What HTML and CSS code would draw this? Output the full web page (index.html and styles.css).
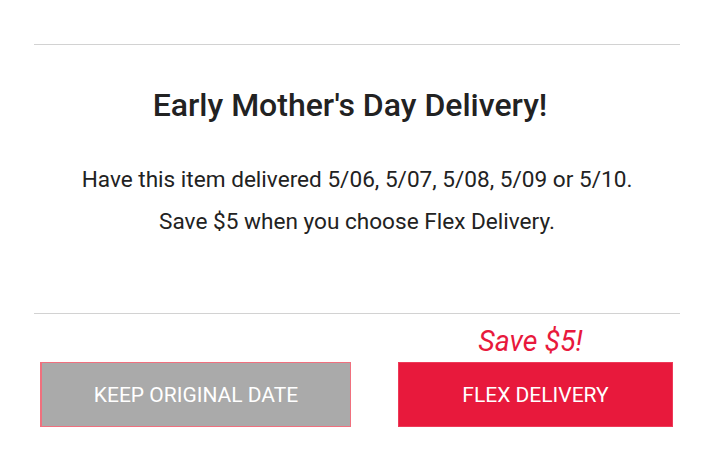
FILE: index.html
```html
<!DOCTYPE html>
<html lang="en">
<head>
    <meta charset="UTF-8">
    <meta name="viewport" content="width=device-width, initial-scale=1.0">
    <title>Flex Delivery</title>
    <link rel="stylesheet" href="styles.css">
</head>
<body>

<div class="modal">
    <hr class="divider">

    <section class="promo">
        <h2>Early Mother's Day Delivery!</h2>
        <p>Have this item delivered 5/06, 5/07, 5/08, 5/09 or 5/10.</p>
        <p>Save $5 when you choose Flex Delivery.</p>
    </section>

    <hr class="divider">

    <div class="actions">
        <button class="btn btn-keep" type="button">Keep Original Date</button>
        <div class="flex-col">
            <span class="save-tag">Save $5!</span>
            <button class="btn btn-flex" type="button">Flex Delivery</button>
        </div>
    </div>
</div>

</body>
</html>
```

FILE: styles.css
```css
body {
    font-family: Roboto, "Liberation Sans", Arial, sans-serif;
    margin: 0;
    padding: 0;
    background-color: white;
    color: #222;
}
.modal {
    margin: 0 32px 0 34px;
    padding-top: 44px;
}
.divider {
    border: 0;
    border-top: 1px solid #d2d2d2;
    margin: 0;
}
.promo {
    text-align: center;
    padding: 41px 0 70px;
}
.promo h2 {
    font-size: 32px;
    font-weight: 500;
    margin: 0 14px 35px 0;
    line-height: 38px;
}
.promo p {
    font-size: 22.6px;
    margin: 0;
    line-height: 42px;
}
.actions {
    display: flex;
    justify-content: space-between;
    align-items: flex-end;
    padding: 12px 7px 0 6px;
}
.flex-col {
    display: flex;
    flex-direction: column;
    align-items: center;
    width: 275px;
}
.save-tag {
    color: #e8193c;
    font-style: italic;
    font-size: 28.5px;
    line-height: 32px;
    margin: 0 10px 4px 0;
}
.btn {
    height: 65px;
    font-family: inherit;
    font-size: 21px;
    text-transform: uppercase;
    color: white;
    cursor: pointer;
}
.btn-keep {
    width: 311px;
    background-color: #aaa;
    border: 1px solid #f0707e;
    border-left-width: 2px;
}
.btn-flex {
    width: 275px;
    background-color: #e8193c;
    border: 1px solid #ee3a58;
}
```
